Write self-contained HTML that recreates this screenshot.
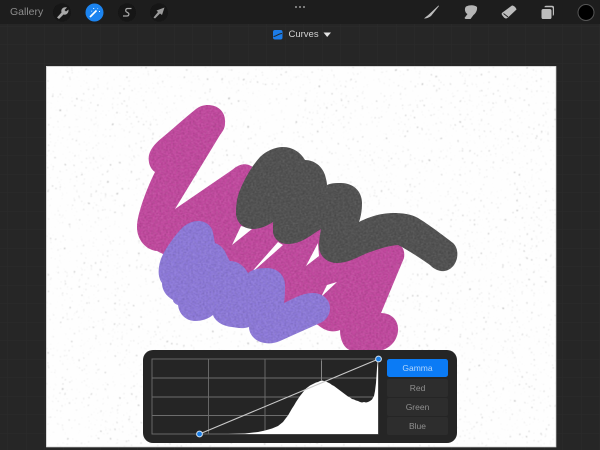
<!DOCTYPE html>
<html><head><meta charset="utf-8"><style>
html,body{margin:0;padding:0;background:#262626}
#r{position:relative;width:600px;height:450px;overflow:hidden;font-family:"Liberation Sans",sans-serif}
svg{position:absolute;left:0;top:0}
.t{position:absolute;white-space:nowrap;filter:blur(.3px)}
.b{position:absolute;left:387px;width:61px;height:18px;background:#2d2d2d;border-radius:2px;color:#8f8f8f;font-size:8.5px;line-height:18px;text-align:center}
.b span{filter:blur(.3px);display:inline-block}
</style></head><body><div id="r">
<svg width="600" height="450" viewBox="0 0 600 450">
<defs>
<pattern id="g" width="18.5" height="18.5" patternUnits="userSpaceOnUse" x="8" y="8"><path d="M18.5 0V18.5H0" fill="none" stroke="#2c2c2c" stroke-width="1"/></pattern>
<filter id="grain" x="0" y="0" width="100%" height="100%" color-interpolation-filters="sRGB">
<feTurbulence type="fractalNoise" baseFrequency="0.6 0.9" numOctaves="2" seed="4"/>
<feGaussianBlur stdDeviation="0.5" result="n"/>
<feColorMatrix in="n" type="matrix" values="0 0 0 0 0  0 0 0 0 0  0 0 0 0 0  .5 0 0 0 -0.22" result="d"/>
<feComposite in="d" in2="SourceAlpha" operator="in" result="dc"/>
<feColorMatrix in="n" type="matrix" values="0 0 0 0 1  0 0 0 0 1  0 0 0 0 1  0 .4 0 0 -0.17" result="l"/>
<feComposite in="l" in2="SourceAlpha" operator="in" result="lc"/>
<feMerge><feMergeNode in="SourceGraphic"/><feMergeNode in="dc"/><feMergeNode in="lc"/></feMerge>
</filter>
<filter id="specks" x="0" y="0" width="100%" height="100%" color-interpolation-filters="sRGB">
<feTurbulence type="fractalNoise" baseFrequency="0.42" numOctaves="2" seed="11"/>
<feColorMatrix type="matrix" values="0 0 0 0 0.42  0 0 0 0 0.42  0 0 0 0 0.42  0 0 4 0 -2.85"/>
<feGaussianBlur stdDeviation="0.45"/>
</filter>
<filter id="s"><feGaussianBlur stdDeviation="0.35"/></filter>
</defs>
<rect width="600" height="450" fill="#262626"/>
<rect width="600" height="450" fill="url(#g)"/>
<rect x="0" y="0" width="600" height="24" fill="#1d1d1d"/>
<rect x="46" y="66" width="510" height="381" fill="#fefefe"/>
<rect x="46" y="66" width="510" height="381" filter="url(#specks)"/>
<rect x="46.500" y="66.500" width="509.500" height="380.500" fill="none" stroke="#c8c8c8" stroke-width=".7"/>
<g filter="url(#grain)">
<path fill="#c2489f" d="M208 105C219 105 226 113 225 123C225 128 223 131 220 135L175 209L232 170C238 165 243 163 249 165L300 190L398 245C403 246 405 251 404 258L381 313C392 313 399 321 398 331C397 342 388 350 378 351L352 351C344 349 340 340 340 330C333 333 325 331 318 325L240 300L165 255L157 251C146 250 137 240 137 227C137 214 147 188 155 172C149 168 148 160 149 155C151 147 158 141 163 137C175 127 186 117 196 109C200 106 204 105 208 105Z"/>
</g>
<path fill="#fefefe" d="M232 245L241 226L252 229ZM248 276L278 242L283 245ZM306 266L318 243L319 256ZM321 297L337 282L327 285Z"/>
<g filter="url(#grain)">
<path fill="#505050" d="M283 147C293 147 301 153 305 160C314 160 322 166 325 175C326 179 327 182 327 185C331 183 336 183 341 183C353 183 362 191 362 203C362 210 361 216 359 222C369 217 381 213 393 213C402 213 411 214 418 218C428 224 444 236 453 243C457 247 458 252 457 258C455 267 448 272 441 271C436 270 433 268 430 265C420 258 408 250 398 245C387 246 379 249 370 252C359 256 349 263 337 263C327 263 319 256 319 246C319 240 320 234 321 229C312 234 302 244 288 244C279 244 273 238 273 231C273 228 273 225 273 222C267 226 260 229 253 229C243 229 236 222 236 213C236 205 237 197 240 190C245 178 252 166 260 157C266 151 275 147 283 147Z"/>
</g>
<g filter="url(#grain)">
<path fill="#8d79da" d="M198 221C206 221 212 226 213 233C214 236 214 240 215 243C221 245 225 250 227 256C229 259 229 260 230 261C238 261 244 266 248 273C253 269 260 268 267 268C277 268 285 275 285 285C285 291 285 297 284 303C293 299 302 293 313 293C323 293 330 300 330 308C330 316 325 321 320 323C307 329 293 335 280 341C275 343 270 344 265 343C256 342 249 335 249 327C243 329 238 328 232 327C222 326 215 321 213 315C208 319 202 321 195 321C186 321 179 314 178 305C175 304 173 302 173 300C166 296 162 290 162 283C159 279 158 273 159 267C160 258 165 250 170 243C174 237 178 232 183 227C188 223 193 221 198 221Z"/>
</g>
<rect x="143" y="350" width="314" height="93" rx="10" fill="#252525"/>
<g stroke="#6d6d6d" stroke-width=".9" fill="none" filter="url(#s)">
<rect x="152" y="359" width="226" height="75"/>
<path d="M208.500 359V434M265 359V434M321.500 359V434M152 378H378M152 397H378M152 415.500H378"/>
</g>
<path fill="#fff" filter="url(#s)" d="M228 434L245 433.500L258 432L265 430.500L272 428.500L278 426L283 422L286 418L288 415.500L290 412L292 408.500L294 405.500L296 402L298 399L300 396L302 393.500L304 391L306 388.500L308 387L310 385.500L312 384.500L314 383.500L316 382.500L318 382L320 381L322 380.500L324 381L326 381.500L328 382.500L330 383.500L332 385L334 386L336 387.500L338 389L340 390.500L342 392L344 393.500L346 395L348 396.500L350 397.500L352 399L354 399.500L356 400.500L358 401L360 402L362 402.500L364 402L366 402.500L368 402L370 401L372 399.500L374 396L375 391L376 383L377 368L378 358L378 434Z"/>
<path d="M321.400 381V361" stroke="#8f8f8f" stroke-width=".8"/>
<path d="M199.500 434L378.500 359" stroke="#c9c9c9" stroke-width="1.100" fill="none"/>
<circle cx="199.500" cy="434" r="2.900" fill="#1a7ee6" stroke="#d6e4f2" stroke-width="1"/>
<circle cx="378.500" cy="359" r="2.900" fill="#1a7ee6" stroke="#d6e4f2" stroke-width="1"/>
<g filter="url(#s)">
<circle cx="62" cy="12.500" r="9" fill="#141414"/>
<circle cx="94.500" cy="12.500" r="9" fill="#1a84f0"/>
<circle cx="127" cy="12.500" r="9" fill="#141414"/>
<circle cx="159" cy="12.500" r="9" fill="#141414"/>
<path d="M57 17.500L61.500 12.500C60.500 9 63.500 6.500 67 7.500L64.500 10L66 11.500L68.500 9.500C69 13 66 15.500 63.500 14.500L59 19Z" fill="#a8a8a8"/>
<path d="M90 17L96.500 10.500" stroke="#fff" stroke-width="1.700"/>
<path d="M93.500 8l.4 1M97.500 8.500l.4.400M99 11.500l1 0M91.500 11l.6.300" stroke="#fff" stroke-width="1"/>
<path d="M131.500 8.500H127.500C125.500 8.500 125 11.500 127 12.200L128 12.800C129.500 13.500 129 16 127 16H123" stroke="#a8a8a8" stroke-width="1.200" fill="none"/>
<path d="M153.500 17.500L158 12L156.500 10.500L164.500 7.500L162 15L160 13.500L155 18.500Z" fill="#9a9a9a"/>
<path d="M424 18.500C425.500 17 427 16 428 15.200L438.500 5.500L439 6L431 16C429 17.500 426.500 18.500 424 18.500Z" fill="#bdbdbd"/>
<path d="M466 6.500C470 4.500 475 5 477 7C477.500 10 476 13 473.500 15L470.500 19H465.500L464.500 18L467.500 14C465 13 464 8.500 466 6.500Z" fill="#b5b5b5"/>
<path d="M502.500 12.500L512 5.500C513.500 5 516.500 8 516.500 9.500L508 17.500C506.500 19 505 18.500 504 17.500L502 15C501.500 14 501.500 13.300 502.500 12.500Z" fill="#bdbdbd"/>
<path d="M503.500 13.500L508 17" stroke="#1d1d1d" stroke-width=".9"/>
<rect x="541.500" y="9" width="10" height="10" rx="1.800" fill="#bdbdbd"/>
<path d="M544.500 7.200C544.500 6.200 545 5.800 546 5.800H552C553.500 5.800 554 6.500 554 7.500V14C554 15 553.500 15.600 552.800 15.800V8.500C552.800 7.700 552.300 7.200 551.500 7.200Z" fill="#bdbdbd"/>
<circle cx="586" cy="12.500" r="8" fill="#050505" stroke="#555" stroke-width="1"/>
<circle cx="296" cy="7" r="1" fill="#9a9a9a"/><circle cx="300" cy="7" r="1" fill="#9a9a9a"/><circle cx="304" cy="7" r="1" fill="#9a9a9a"/>
<rect x="273" y="30" width="9.500" height="9.500" rx="2" fill="#1a7be8"/>
<path d="M273.500 36.500C276 36.500 279 33.500 282 33.500" stroke="#262626" stroke-width="1" fill="none"/>
<path d="M323.500 32.500H331L327.200 37Z" fill="#e4e4e4"/>
</g>
<rect x="387" y="359" width="61" height="18" rx="2.500" fill="#0b7bf5"/>
</svg>
<div class="t" style="left:10px;top:6px;font-size:10.500px;line-height:13px;color:#8c8c8c">Gallery</div>
<div class="t" style="left:288.500px;top:29px;font-size:9.500px;line-height:12px;color:#d2d2d2">Curves</div>
<div class="b" style="top:359px;background:transparent;color:#b4d6fb"><span>Gamma</span></div>
<div class="b" style="top:378.500px"><span>Red</span></div>
<div class="b" style="top:397.500px"><span>Green</span></div>
<div class="b" style="top:416.500px"><span>Blue</span></div>
</div></body></html>
